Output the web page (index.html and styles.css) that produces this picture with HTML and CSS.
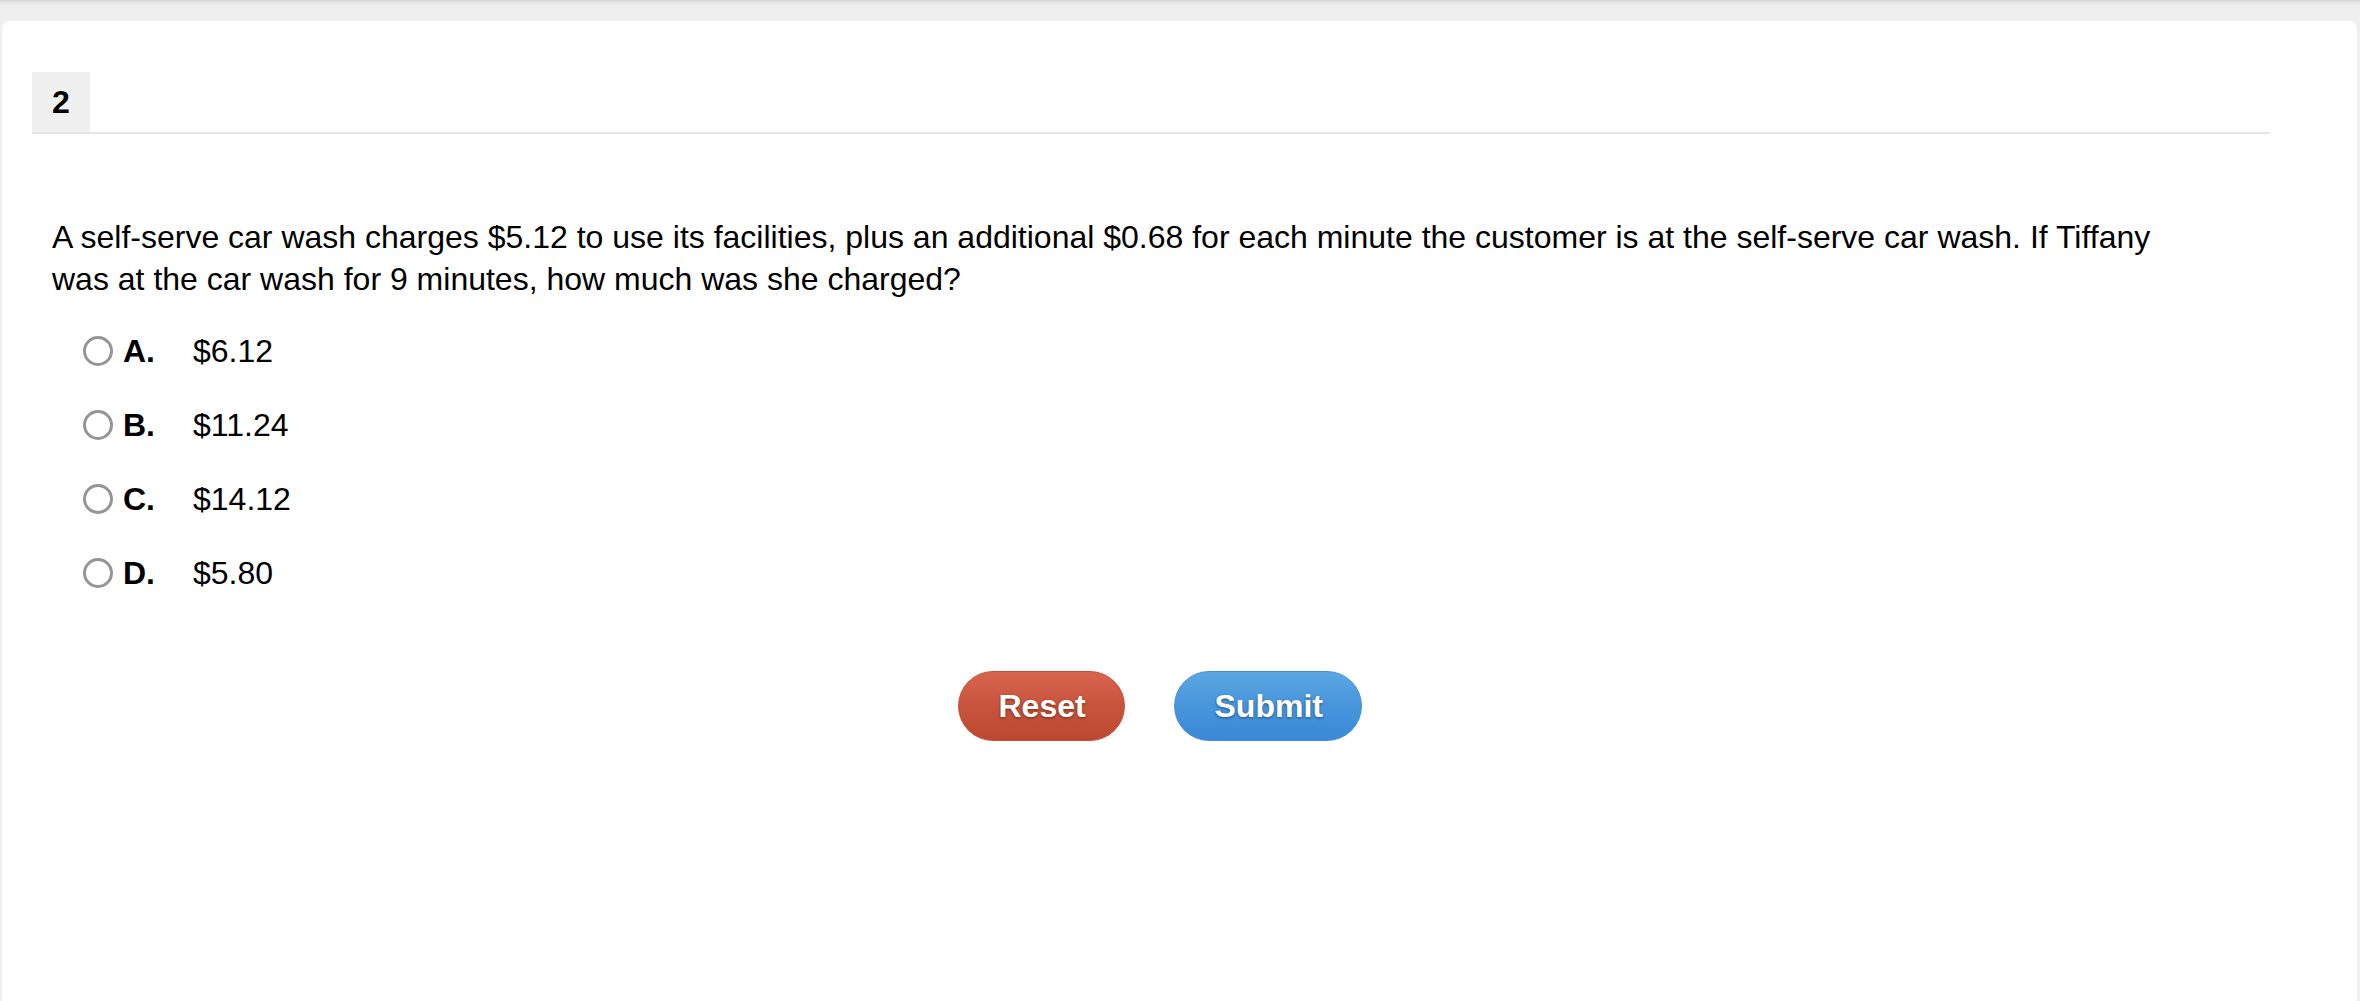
FILE: index.html
```html
<!DOCTYPE html>
<html lang="en">
<head>
<meta charset="utf-8">
<title>Question 2</title>
<link rel="stylesheet" href="styles.css">
</head>
<body>
<div class="page">
  <div class="card">
    <div class="qhead"><div class="qnum">2</div></div>
    <p class="question">A self-serve car wash charges $5.12 to use its facilities, plus an additional $0.68 for each minute the customer is at the self-serve car wash. If Tiffany was at the car wash for 9 minutes, how much was she charged?</p>
    <ul class="options">
      <li class="option"><span class="radio"></span><span class="letter">A.</span><span class="value">$6.12</span></li>
      <li class="option"><span class="radio"></span><span class="letter">B.</span><span class="value">$11.24</span></li>
      <li class="option"><span class="radio"></span><span class="letter">C.</span><span class="value">$14.12</span></li>
      <li class="option"><span class="radio"></span><span class="letter">D.</span><span class="value">$5.80</span></li>
    </ul>
    <div class="actions">
      <button class="btn btn-reset" type="button">Reset</button>
      <button class="btn btn-submit" type="button">Submit</button>
    </div>
  </div>
</div>
</body>
</html>
```
FILE: styles.css
```css
html, body {
  margin: 0;
  padding: 0;
  height: 100%;
  overflow: hidden;
}
body {
  background: #efefef;
  font-family: "Liberation Sans", Arial, sans-serif;
  color: #000;
}
.page {
  min-height: 100%;
  padding-top: 21px;
  box-sizing: border-box;
  background:
    linear-gradient(to bottom, #d6d6d6 0px, #e8e8e8 3px, #efefef 7px, #efefef 100%);
  background-repeat: no-repeat;
  background-size: 100% 21px;
}
.card {
  margin: 0 3px 0 2px;
  background: #fff;
  border-radius: 8px 8px 0 0;
  padding: 51px 87px 0 30px;
  height: 980px;
  box-sizing: border-box;
}
.qhead {
  border-bottom: 2px solid #e6e6e6;
  display: flex;
}
.qnum {
  width: 58px;
  height: 60px;
  background: #f0f0f0;
  font-weight: bold;
  font-size: 32px;
  line-height: 60px;
  text-align: center;
}
.question {
  margin: 82px 90px 0 20px;
  font-size: 32px;
  line-height: 42px;
}
.options {
  list-style: none;
  margin: 14px 0 0 51px;
  padding: 0;
}
.option {
  display: flex;
  align-items: center;
  height: 74px;
  font-size: 32px;
}
.radio {
  width: 30px;
  height: 30px;
  box-sizing: border-box;
  border: 3px solid #959595;
  border-radius: 50%;
  background: #fff;
  margin-right: 10px;
}
.letter {
  font-weight: bold;
  width: 70px;
}
.actions {
  display: flex;
  justify-content: center;
  gap: 49px;
  margin-top: 61px;
  padding-left: 17px;
}
.btn {
  height: 70px;
  border-radius: 35px;
  padding: 0 40px;
  font-family: "Liberation Sans", Arial, sans-serif;
  font-weight: bold;
  font-size: 32px;
  color: #fff;
  text-shadow: 0 1px 3px rgba(0,0,0,0.45);
  border: 1px solid transparent;
  cursor: pointer;
}
.btn-reset {
  width: 167px;
  background: linear-gradient(to bottom, #d9654f 0%, #c9543c 50%, #bd4830 100%);
  border-color: #c55039;
}
.btn-submit {
  width: 188px;
  background: linear-gradient(to bottom, #5ba7e2 0%, #4796dc 50%, #3a88d7 100%);
  border-color: #4290d9;
}
```
